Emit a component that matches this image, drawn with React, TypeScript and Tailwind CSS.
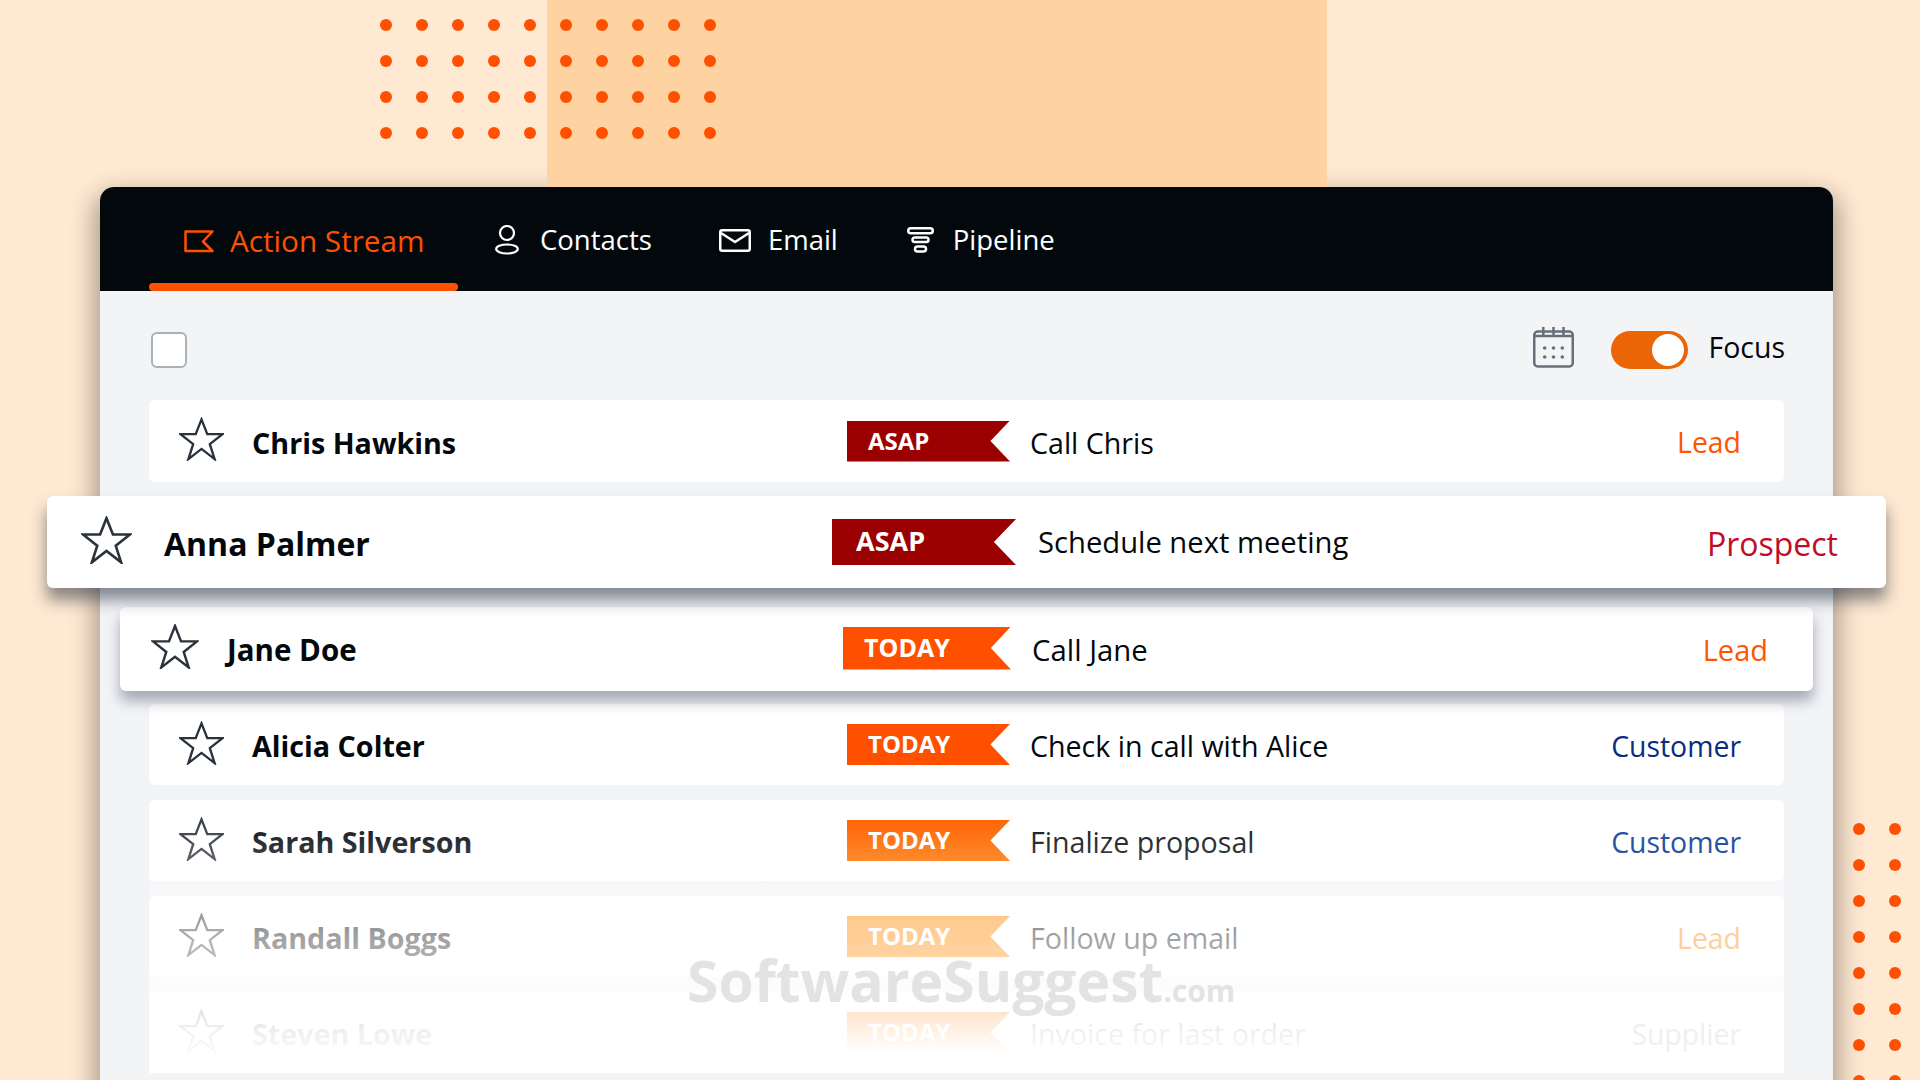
type Size = 'first' | 'normal' | 'large' | 'mid';

const normal = {
  row: 'h-[81px] pl-[30px] pr-[43px] rounded-[6px]',
  star: 'w-[45px] h-[44px] -mt-[4px]',
  name: 'ml-[28px] w-[595px] text-[28.7px] mt-[3px]',
  badge: 'w-[163px] h-[41px] pl-[21px] pb-[1px] text-[24px]',
  task: 'ml-[20px] text-[28.6px] mt-[4px]',
  role: 'text-[28.4px] mt-[3px]',
};

const sizes = {
  normal,
  first: { ...normal, row: 'h-[82px] pl-[30px] pr-[43px] rounded-[6px]' },
  large: {
    row: 'h-[92px] pl-[34px] pr-[48px] rounded-[6px]',
    star: 'w-[51px] h-[48px] -mt-[4px]',
    name: 'ml-[32px] w-[668px] text-[32px] mt-[4px]',
    badge: 'w-[184px] h-[46px] pl-[24px] pb-[1px] text-[27px]',
    task: 'ml-[22px] text-[29.2px] mt-[1px]',
    role: 'text-[32px] mt-[4px]',
  },
  mid: {
    row: 'h-[84px] pl-[31px] pr-[45px] rounded-[6px]',
    star: 'w-[48px] h-[45px] -mt-[6px]',
    name: 'ml-[28px] w-[616px] text-[29.5px] mt-[3px]',
    badge: 'w-[168px] h-[43px] pl-[21px] text-[25px] -mt-[2px]',
    task: 'ml-[21px] text-[29.3px] mt-[3px]',
    role: 'text-[29px] mt-[1px]',
  },
};

const roleColors: Record<string, string> = {
  Lead: 'text-[#ff5500]',
  Prospect: 'text-[#c00d27]',
  Customer: 'text-[#0b2c80]',
  Supplier: 'text-[#03080d]',
};

function Star({ className }: { className: string }) {
  return (
    <svg viewBox="0 0 46 44" fill="none" className={`shrink-0 ${className}`}>
      <path
        d="M23 2 L28.9 17 H44.5 L31.5 27.3 L36.4 42.5 L23 32.1 L9.6 42.5 L14.5 27.3 L1.5 17 H17.1 Z"
        stroke="#2a323c"
        strokeWidth="2.4"
      />
    </svg>
  );
}

function Row({
  size = 'normal',
  name,
  tag,
  task,
  role,
  className = '',
  badgeColor,
  roleColor,
}: {
  size?: Size;
  name: string;
  tag: string;
  task: string;
  role: string;
  className?: string;
  badgeColor?: string;
  roleColor?: string;
}) {
  const s = sizes[size];
  const badgeBg = badgeColor ?? (tag === 'ASAP' ? 'bg-[#9b0000]' : 'bg-[#ff5000]');
  return (
    <div className={`flex items-center bg-white ${s.row} ${className}`}>
      <Star className={s.star} />
      <div className={`shrink-0 font-bold text-[#03080d] ${s.name}`}>{name}</div>
      <div
        className={`relative z-10 flex shrink-0 items-center font-bold text-white [clip-path:polygon(0_0,100%_0,88%_50%,100%_100%,0_100%)] ${s.badge} ${badgeBg}`}
      >
        {tag}
      </div>
      <div className={`text-[#03080d] ${s.task}`}>{task}</div>
      <div className={`relative z-10 ml-auto ${s.role} ${roleColor ?? roleColors[role]}`}>{role}</div>
    </div>
  );
}

function Dots({ count, cols, className }: { count: number; cols: string; className: string }) {
  return (
    <div className={`grid gap-[24px] ${cols} ${className}`}>
      {Array.from({ length: count }).map((_, i) => (
        <div key={i} className="h-[12px] w-[12px] rounded-full bg-[#ff5000]" />
      ))}
    </div>
  );
}

export default function App() {
  return (
    <div className="relative h-[1080px] w-[1920px] overflow-hidden bg-[#ffe9d2] font-['Open_Sans',sans-serif]">
      {/* top band */}
      <div className="relative h-[187px] pl-[547px]">
        <div className="h-full w-[780px] bg-[#ffd3a1]" />
        <Dots count={40} cols="grid-cols-10" className="absolute left-[380px] top-[19px]" />
      </div>

      <Dots count={16} cols="grid-cols-2" className="absolute left-[1853px] top-[823px]" />

      <div className="ml-[100px] w-[1733px] rounded-t-[14px] bg-[#f3f4f6] pb-[40px] shadow-[0_12px_24px_6px_rgba(0,0,0,0.33)]">
        {/* nav */}
        <nav className="flex h-[104px] rounded-t-[14px] bg-[#03080d] pl-[49px] text-[27.5px]">
          <div className="flex w-[309px] flex-col text-[#ff5000]">
            <div className="flex flex-1 items-center gap-[16px] pl-[35px] pt-[12px] text-[29.7px]">
              <svg viewBox="0 0 30 23" fill="none" className="h-[23px] w-[30px]">
                <path d="M1.5 1.5 H28.5 L19 11.5 L28.5 21 H1.5 Z" stroke="#ff5000" strokeWidth="2.5" strokeLinejoin="round" />
              </svg>
              Action Stream
            </div>
            <div className="h-[8px] rounded-[4px] bg-[#ff5000]" />
          </div>
          <div className="ml-[37px] flex items-center gap-[21px] pt-[2px] text-white">
            <svg viewBox="0 0 24 30" fill="none" className="h-[30px] w-[24px]" stroke="white" strokeWidth="2.2">
              <circle cx="12" cy="8" r="7" />
              <ellipse cx="12" cy="24" rx="10.8" ry="4.5" />
            </svg>
            Contacts
          </div>
          <div className="ml-[67px] flex items-center gap-[17px] pt-[2px] text-white">
            <svg viewBox="0 0 32 23" fill="none" className="h-[23px] w-[32px]" stroke="white" strokeWidth="2.5" strokeLinejoin="round">
              <rect x="1.25" y="1.25" width="29.5" height="20.5" rx="2" />
              <path d="M2 4 L16 13 L30 4" />
            </svg>
            Email
          </div>
          <div className="ml-[69px] flex items-center gap-[19px] pt-[2px] text-white">
            <svg viewBox="0 0 27 26" fill="none" className="h-[26px] w-[27px]" stroke="white" strokeWidth="2.5">
              <rect x="1.25" y="1.25" width="24.5" height="5" rx="2.5" />
              <rect x="5.5" y="10.5" width="16" height="4.5" rx="2.25" />
              <rect x="8" y="19.5" width="11" height="5" rx="2.5" />
            </svg>
            Pipeline
          </div>
        </nav>

        {/* toolbar */}
        <div className="flex h-[109px] items-center pl-[51px] pr-[48px] pt-[9px]">
          <div className="h-[36px] w-[36px] rounded-[6px] border-2 border-[#a9b0b8] bg-white" />
          <svg viewBox="0 0 41 41" fill="none" className="ml-auto -mt-[6px] h-[41px] w-[41px]" stroke="#67707a" strokeWidth="2.5">
            <rect x="1.25" y="4.5" width="38.5" height="35" rx="3.5" />
            <path d="M1.5 9 H39.5 M10.3 0 V8 M20.5 0 V8 M30.5 0 V8" />
            <g fill="#67707a" stroke="none">
              <circle cx="11.7" cy="21" r="1.8" />
              <circle cx="20.5" cy="21" r="1.8" />
              <circle cx="29.3" cy="21" r="1.8" />
              <circle cx="11.7" cy="30" r="1.8" />
              <circle cx="20.5" cy="30" r="1.8" />
              <circle cx="29.3" cy="30" r="1.8" />
            </g>
          </svg>
          <div className="ml-[37px] flex h-[38px] w-[77px] items-center justify-end rounded-full bg-[#eb6405] pr-[4px]">
            <div className="h-[32px] w-[32px] rounded-full bg-white" />
          </div>
          <div className="ml-[20px] -mt-[5px] text-[28.5px] text-[#03080d]">Focus</div>
        </div>

        {/* rows */}
        <div className="relative mx-[49px]">
          <Row size="first" name="Chris Hawkins" tag="ASAP" task="Call Chris" role="Lead" />
          <Row
            size="large"
            name="Anna Palmer"
            tag="ASAP"
            task="Schedule next meeting"
            role="Prospect"
            className="relative z-30 -mx-[102px] mt-[14px] shadow-[0_12px_16px_rgba(20,30,50,0.5)]"
          />
          <Row
            size="mid"
            name="Jane Doe"
            tag="TODAY"
            task="Call Jane"
            role="Lead"
            className="relative z-20 -mx-[29px] mt-[19px] shadow-[0_10px_14px_rgba(20,30,60,0.35)]"
          />
          <Row name="Alicia Colter" tag="TODAY" task="Check in call with Alice" role="Customer" className="mt-[13px]" />
          <div className="relative mt-[15px] flex flex-col gap-[15px]">
            <Row
              name="Sarah Silverson"
              tag="TODAY"
              task="Finalize proposal"
              role="Customer"
              badgeColor="bg-[linear-gradient(to_bottom,#ff6508,#ff8a2c)]"
              roleColor="text-[#2a52a3]"
            />
            <Row
              name="Randall Boggs"
              tag="TODAY"
              task="Follow up email"
              role="Lead"
              badgeColor="bg-[linear-gradient(to_bottom,#ffc98c,#ffd3a1)]"
              roleColor="text-[#ffcf9b]"
            />
            <Row
              name="Steven Lowe"
              tag="TODAY"
              task="Invoice for last order"
              role="Supplier"
              badgeColor="bg-[linear-gradient(to_bottom,#ffe6cc,#ffffff)]"
              roleColor="text-[#eff0f1]"
            />
            {/* fade out over the last rows */}
            <div className="absolute inset-0 bg-[linear-gradient(to_bottom,rgba(255,255,255,0)_0%,rgba(255,255,255,0.15)_15%,rgba(255,255,255,0.35)_31%,rgba(255,255,255,0.62)_50%,rgba(255,255,255,0.75)_67%,rgba(255,255,255,0.94)_85%,rgba(255,255,255,1)_100%)]" />
          </div>
        </div>
      </div>

      {/* watermark */}
      <div className="absolute left-[687px] top-[945px] z-40 flex items-baseline whitespace-nowrap font-bold text-[#e3e3e3]">
        <span className="text-[57px] leading-[70px]">SoftwareSuggest</span>
        <span className="text-[30px] leading-[70px]">.com</span>
      </div>
    </div>
  );
}
